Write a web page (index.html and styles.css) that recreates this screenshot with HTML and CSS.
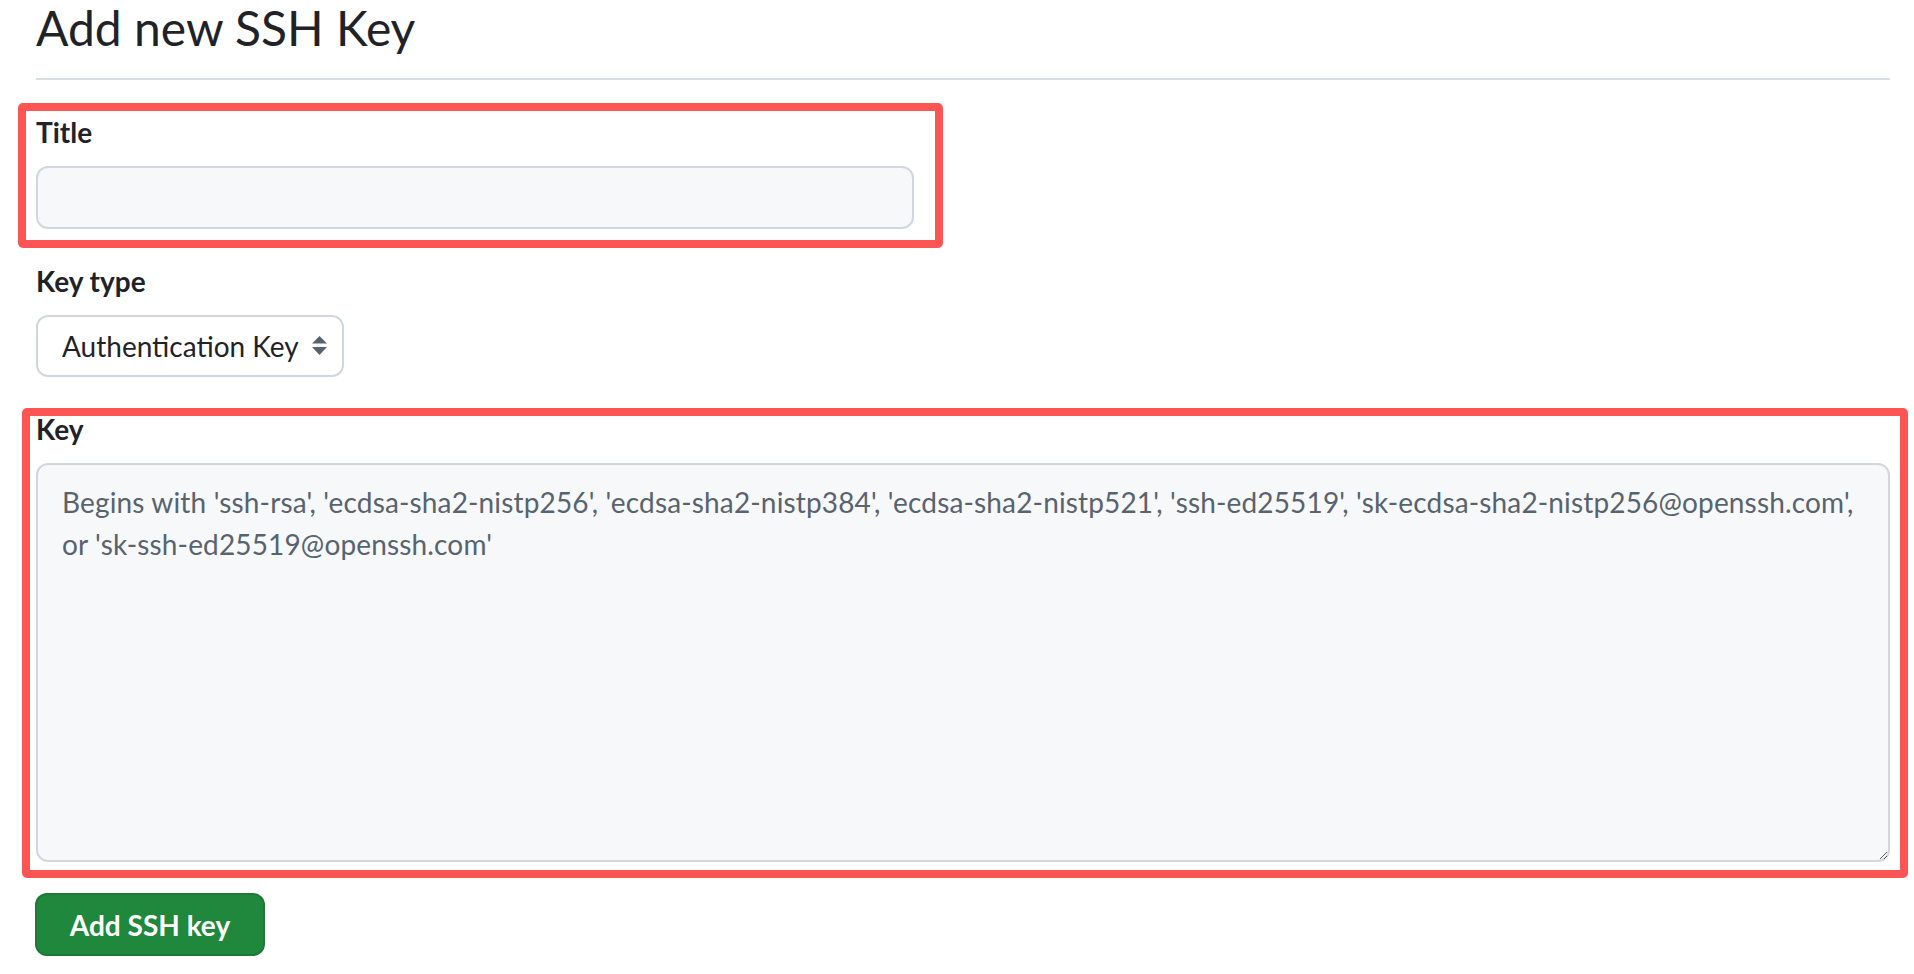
FILE: index.html
```html
<!DOCTYPE html>
<html lang="en">
<head>
  <meta charset="UTF-8">
  <meta name="viewport" content="width=device-width, initial-scale=1.0">
  <title>Add new SSH Key</title>
  <link rel="stylesheet" href="styles.css">
</head>
<body>
  <div id="page">
    <h1 class="subhead">Add new SSH Key</h1>

    <form id="ssh-form">
      <!-- Title -->
      <div class="form-group">
        <span class="mark mark-title"></span>
        <label for="key-title">Title</label>
        <input type="text" id="key-title" class="form-control title-input">
      </div>

      <!-- Key type -->
      <div class="form-group">
        <label for="key-type">Key type</label>
        <div class="select-wrap">
          <select id="key-type" class="form-control form-select">
            <option>Authentication Key</option>
            <option>Signing Key</option>
          </select>
          <svg class="select-arrows" width="15" height="20" viewBox="0 0 15 20">
            <path d="M7.5 0 L15 7.5 H0 Z" fill="#59636e"/>
            <path d="M0 11 H15 L7.5 19 Z" fill="#59636e"/>
          </svg>
        </div>
      </div>

      <!-- Key -->
      <div class="form-group">
        <span class="mark mark-key"></span>
        <label for="key-body">Key</label>
        <textarea id="key-body" class="form-control key-input" placeholder="Begins with 'ssh-rsa', 'ecdsa-sha2-nistp256', 'ecdsa-sha2-nistp384', 'ecdsa-sha2-nistp521', 'ssh-ed25519', 'sk-ecdsa-sha2-nistp256@openssh.com',&#10;or 'sk-ssh-ed25519@openssh.com'"></textarea>
      </div>

      <button type="submit" class="btn-primary">Add SSH key</button>
    </form>
  </div>
</body>
</html>
```

FILE: styles.css
```css
body {
  margin: 0;
  background: #ffffff;
  color: #1f2328;
  font-family: "Segoe UI", Lato, "Noto Sans", sans-serif;
  font-size: 28px;
  line-height: 42px;
}
#page {
  padding: 0 24px 0 36px;
}
.subhead {
  margin: 0;
  padding-bottom: 22px;
  border-bottom: 2px solid #d8dee4;
  font-size: 48px;
  font-weight: 400;
  line-height: 56px;
}
.form-group {
  position: relative;
  margin-top: 31px;
}
label {
  display: block;
  margin-bottom: 13px;
  font-weight: 700;
}
.form-control {
  box-sizing: border-box;
  display: block;
  padding: 0 24px;
  border: 2px solid #d0d7de;
  border-radius: 12px;
  background-color: #f6f8fa;
  color: #1f2328;
  font-family: inherit;
  font-size: 28px;
  line-height: 42px;
  outline: none;
}
.title-input {
  width: 878px;
  height: 63px;
}
.select-wrap {
  position: relative;
  width: 308px;
}
.form-select {
  width: 308px;
  height: 62px;
  padding-left: 24px;
  background-color: #ffffff;
  appearance: none;
  -webkit-appearance: none;
}
.select-arrows {
  position: absolute;
  top: 21px;
  left: 276px;
  pointer-events: none;
}
.key-input {
  width: 100%;
  height: 399px;
  padding: 16px 24px;
  letter-spacing: 0.15px;
  resize: vertical;
}
.key-input::placeholder {
  color: #59636e;
}
.btn-primary {
  display: block;
  box-sizing: border-box;
  width: 230px;
  height: 63px;
  margin-top: 31px;
  margin-left: -1px;
  padding: 0;
  border: 2px solid rgba(31, 35, 40, 0.15);
  border-radius: 12px;
  background-color: #1f883d;
  color: #ffffff;
  font-family: inherit;
  font-size: 28px;
  font-weight: 700;
  cursor: pointer;
}

/* red annotation frames drawn over the screenshot */
.mark {
  position: absolute;
  box-sizing: border-box;
  border: 8px solid #fd5454;
  border-radius: 5px;
  pointer-events: none;
}
.mark-title {
  top: -8px;
  left: -18px;
  width: 925px;
  height: 145px;
}
.mark-key {
  top: 0;
  left: -14px;
  right: -18px;
  bottom: -16px;
}
```
